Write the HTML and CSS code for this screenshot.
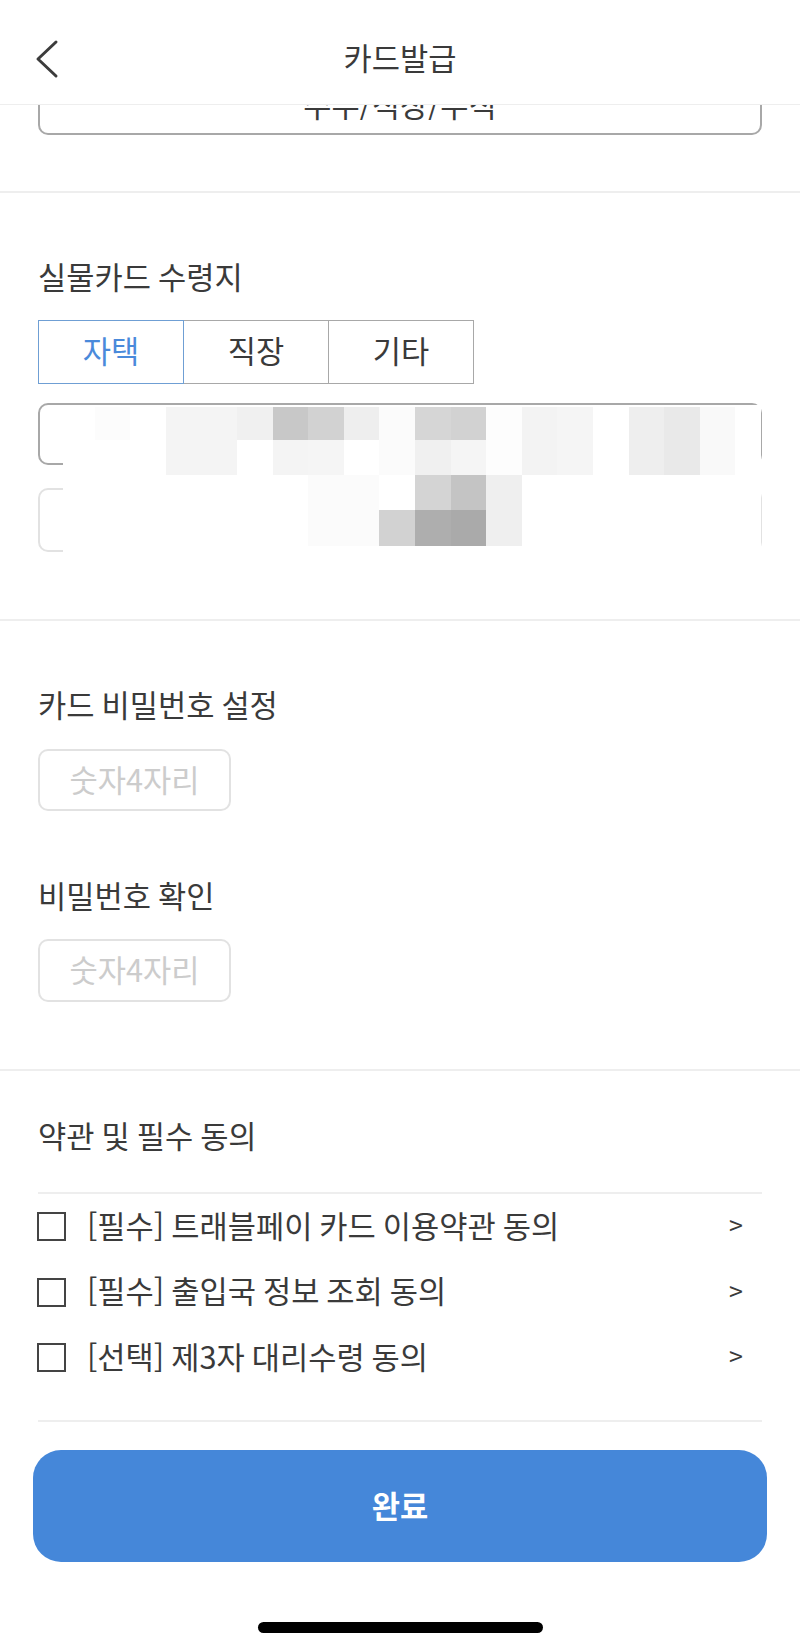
FILE: index.html
```html
<!DOCTYPE html>
<html lang="ko">
<head>
<meta charset="utf-8">
<title>카드발급</title>
<link rel="stylesheet" href="styles.css">
</head>
<body>
<div class="screen">
  <header class="topbar">
    <div class="back">
      <svg width="24" height="40" viewBox="0 0 24 40"><path d="M21 3 L3 20 L21 37" fill="none" stroke="#3c3c3c" stroke-width="3" stroke-linecap="round" stroke-linejoin="round"/></svg>
    </div>
    <h1 class="title">카드발급</h1>
    <div></div>
  </header>
  <main class="scroll">
    <section class="sec sec-job">
      <div class="field field-dark job">주부/직장/무직</div>
    </section>
    <section class="sec sec-addr">
      <h2 class="label">실물카드 수령지</h2>
      <div class="tabs">
        <div class="tab tab-on">자택</div>
        <div class="tab">직장</div>
        <div class="tab">기타</div>
      </div>
      <div class="addr">
        <div class="field field-dark addr-1"></div>
        <div class="field field-light addr-2"></div>
        <div class="mosaic">
          <i class="fc"></i><i></i><i class="f4"></i><i class="f4"></i><i class="f0"></i><i class="c8"></i><i class="d2"></i><i class="ee"></i><i class="fb"></i><i class="d6"></i><i class="d2"></i><i class="fd"></i><i class="f3"></i><i class="f5"></i><i></i><i class="ee"></i><i class="e9"></i><i class="f9"></i><i></i>
          <i></i><i></i><i class="f4"></i><i class="f4"></i><i></i><i class="f4"></i><i class="f5"></i><i></i><i class="fb"></i><i class="f0"></i><i class="f5"></i><i class="fd"></i><i class="f3"></i><i class="f5"></i><i></i><i class="ee"></i><i class="e9"></i><i class="f9"></i><i></i>
          <i></i><i></i><i></i><i></i><i></i><i></i><i class="fb"></i><i class="fb"></i><i></i><i class="d4"></i><i class="c4"></i><i class="ef"></i><i></i><i></i><i></i><i></i><i></i><i></i><i></i>
          <i></i><i></i><i></i><i></i><i></i><i></i><i class="fb"></i><i class="fb"></i><i class="d2"></i><i class="ae"></i><i class="aa"></i><i class="ef"></i><i></i><i></i><i></i><i></i><i></i><i></i><i></i>
        </div>
      </div>
    </section>
    <section class="sec sec-pin">
      <h2 class="label">카드 비밀번호 설정</h2>
      <div class="field field-light pin">숫자4자리</div>
      <h2 class="label label-next">비밀번호 확인</h2>
      <div class="field field-light pin pin-next">숫자4자리</div>
    </section>
    <section class="sec sec-terms">
      <h2 class="label">약관 및 필수 동의</h2>
      <ul class="terms">
        <li class="term"><span class="check"></span><span class="term-text">[필수] 트래블페이 카드 이용약관 동의</span><span class="more">&gt;</span></li>
        <li class="term"><span class="check"></span><span class="term-text">[필수] 출입국 정보 조회 동의</span><span class="more">&gt;</span></li>
        <li class="term"><span class="check"></span><span class="term-text">[선택] 제3자 대리수령 동의</span><span class="more">&gt;</span></li>
      </ul>
    </section>
    <button class="done" type="button">완료</button>
  </main>
  <div class="homebar"></div>
</div>
</body>
</html>
```
FILE: styles.css
```css
* { box-sizing: border-box; }
html, body { margin: 0; padding: 0; background: #fff; }
body { font-family: "Noto Sans CJK KR", "Noto Sans", sans-serif; font-size: 30.7px; word-spacing: -1.6px; color: #3a3a3a; }
.screen { width: 800px; height: 1649px; overflow: hidden; display: flex; flex-direction: column; background: #fff; }

.topbar { flex: none; height: 105px; display: grid; grid-template-columns: 1fr auto 1fr; align-items: center; border-bottom: 1px solid #eeeeee; }
.back { padding-left: 35px; display: flex; align-items: center; height: 40px; margin-top: 14px; }
.title { margin: 10px 0 0; font-size: 30.7px; line-height: 40px; font-weight: 400; }

.scroll { flex: none; overflow: hidden; }
.sec { border-bottom: 2px solid #eeeeee; }
.label { margin: 0; font-size: 30.7px; line-height: 40px; font-weight: 400; }

.field { border-radius: 10px; background: #fff; }
.field-dark { border: 2px solid #a8a8a8; }
.field-light { border: 2px solid #e2e2e2; }

.sec-job { padding: 0 38px 56px; }
.job { margin-top: -32px; height: 62px; padding-bottom: 2px; display: flex; align-items: center; justify-content: center; }

.sec-addr { padding: 63px 38px 67px; }
.tabs { display: flex; margin-top: 24px; }
.tab { width: 146px; height: 64px; margin-left: -1px; padding-bottom: 5px; border: 1.5px solid #a8a8a8; display: flex; align-items: center; justify-content: center; }
.tab:first-child { margin-left: 0; }
.tab-on { position: relative; z-index: 1; border-color: #6f9fd4; color: #4a8adb; }

.addr { position: relative; margin-top: 19px; }
.addr-1 { height: 62px; }
.addr-2 { height: 64px; margin-top: 23px; }
.mosaic { position: absolute; left: 25px; right: 1px; top: 2px; bottom: -1px; background: #fff; padding: 2px 0 0 31.6px; display: grid; grid-template-columns: repeat(19, 35.6px); grid-template-rows: 33px 35px 35px 36px; overflow: hidden; }
.mosaic i { display: block; }
.fc { background: #fcfcfc; } .f4 { background: #f4f4f4; } .f0 { background: #f0f0f0; }
.c8 { background: #c8c8c8; } .d2 { background: #d2d2d2; } .ee { background: #eeeeee; }
.fb { background: #fbfbfb; } .d6 { background: #d6d6d6; } .fd { background: #fdfdfd; }
.f3 { background: #f3f3f3; } .f5 { background: #f5f5f5; } .e9 { background: #e9e9e9; }
.f9 { background: #f9f9f9; } .d4 { background: #d4d4d4; } .c4 { background: #c4c4c4; }
.ef { background: #efefef; } .ae { background: #aeaeae; } .aa { background: #aaaaaa; }

.sec-pin { padding: 63px 38px 67px; }
.pin { width: 193px; height: 62px; margin-top: 25px; padding-bottom: 4px; display: flex; align-items: center; justify-content: center; color: #cccccc; }
.label-next { margin-top: 64px; }
.pin-next { height: 63px; margin-top: 24px; }

.sec-terms { padding: 44px 38px 0; border-bottom: 0; }
.terms { list-style: none; margin: 37px 0 0; padding: 0 0 29.5px; border-top: 2px solid #eeeeee; border-bottom: 2px solid #eeeeee; }
.term { height: 65.5px; display: flex; align-items: center; }
.check { flex: none; width: 29px; height: 29px; margin-left: -1px; border: 2px solid #444444; }
.term-text { flex: 1; margin-left: 21px; padding-bottom: 4px; line-height: 40px; }
.more { flex: none; width: 14px; margin-right: 19px; margin-bottom: 5px; font-size: 25px; line-height: 28px; }

.done { display: block; width: 734px; height: 112px; margin: 28px 33px 0; padding: 0 0 3px; border: 0; border-radius: 28px; background: #4587d9; color: #fff; font: inherit; font-weight: 700; }
.homebar { flex: none; width: 285px; height: 11px; margin: 60px auto 0; border-radius: 6px; background: #000; }
```
